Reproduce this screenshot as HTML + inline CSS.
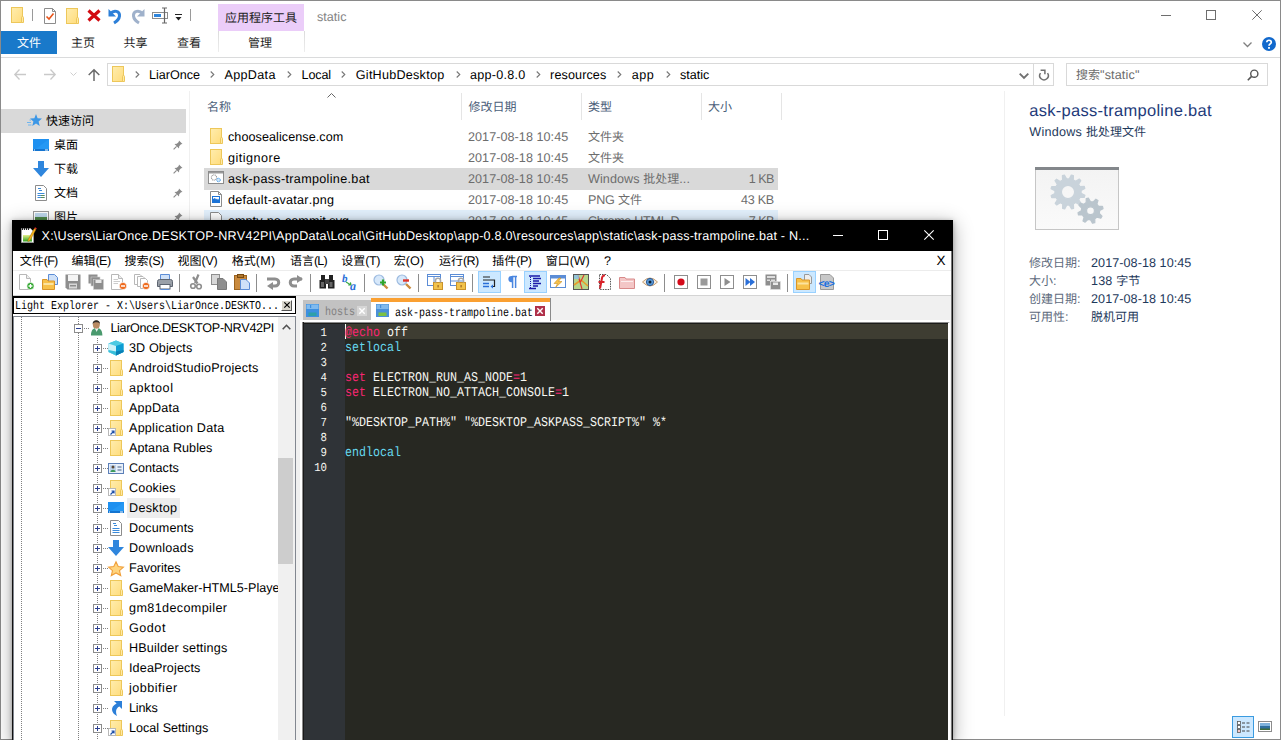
<!DOCTYPE html>
<html><head><meta charset="utf-8"><title>static</title>
<style>
html,body{margin:0;padding:0}html{overflow:hidden;width:1281px;height:740px}
body{width:1281px;height:740px;position:relative;overflow:hidden;background:#fff;font-family:"Liberation Sans",sans-serif;font-size:12.6px;color:#000;line-height:1;text-rendering:geometricPrecision;font-kerning:none}
.a{position:absolute}
.t{position:absolute;white-space:nowrap;line-height:16px;height:16px}
svg{display:block}
.cj{font-family:"Liberation Sans","Noto Sans CJK SC",sans-serif;font-size:12px;letter-spacing:0}
.ic{position:absolute;overflow:visible}
#ex{left:0;top:0;width:1281px;height:740px;box-sizing:border-box;border:1px solid #8a8a8a;background:#fff}
.fd{color:#6d6d6d}
.dv{color:#1E395B}
.dl{color:#5E6B7D}
#np{left:12px;top:220px;width:941px;height:521px;background:#f0f0f0;box-sizing:border-box;border:1px solid #111;box-shadow:0 1px 5px rgba(0,0,0,.3),0 4px 18px 1px rgba(0,0,0,.3)}
.mono{font-family:"Liberation Mono",monospace}
.code{position:absolute;left:345.4px;font-family:"Liberation Mono",monospace;font-size:13.3px;line-height:15px;height:15px;white-space:pre;color:#f8f8f2;transform:scaleX(.8772);transform-origin:0 0}
.ln{position:absolute;left:304px;width:23px;text-align:right;font-family:"Liberation Mono",monospace;font-size:12.2px;line-height:15px;height:15px;color:#f8f8f2;transform:scaleX(.8772);transform-origin:100% 0;margin-top:.7px}
.sim{font-family:"Liberation Mono",monospace;font-size:12px;transform-origin:0 50%;transform:scaleX(.8333)}
</style></head><body>
<svg width="0" height="0" style="position:absolute"><defs>

<linearGradient id="gf" x1="0" y1="0" x2="1" y2="1"><stop offset="0" stop-color="#FFEDAE"/><stop offset="1" stop-color="#FFDC7C"/></linearGradient>
<symbol id="fold" viewBox="0 0 13 16"><rect x="0.5" y="0.5" width="11" height="15" fill="url(#gf)" stroke="#EDC75A"/><path d="M10.5 15.5V10.6Q10.5 9.5 11.5 9.5Q12.5 9.5 12.5 10.6V15.5Z" fill="#FFE9A4" stroke="#EDC75A"/></symbol>
<symbol id="plus" viewBox="0 0 9 9"><rect x="0.5" y="0.5" width="8" height="8" fill="#fff" stroke="#8c8c8c"/><path d="M2 4.5H7M4.5 2V7" stroke="#2b3f8f" stroke-width="1"/></symbol>
<symbol id="minus" viewBox="0 0 9 9"><rect x="0.5" y="0.5" width="8" height="8" fill="#fff" stroke="#8c8c8c"/><path d="M2 4.5H7" stroke="#2b3f8f" stroke-width="1"/></symbol>
<symbol id="pin" viewBox="0 0 10 10"><path d="M6 0.5L9.5 4L8 4.3L6.2 6.2L6 8.5L1.5 4L3.8 3.8L5.7 2Z" fill="#8a8a8a"/><path d="M3.6 6.4L0.6 9.4" stroke="#8a8a8a" stroke-width="1.1"/></symbol>

</defs></svg>
<div id="ex" class="a"></div>
<svg class="ic" style="left:11px;top:7px" width="13" height="16"><use href="#fold"/></svg>
<div class="a" style="left:32px;top:9px;width:1px;height:12px;background:#9a9a9a;"></div>
<svg class="ic" style="left:44px;top:8px" width="12" height="16" viewBox="0 0 12 16"><path d="M0.5 0.5H8.5L11.5 3.5V15.5H0.5Z" fill="#fff" stroke="#8c8c8c"/><path d="M8.5 0.5V3.5H11.5" fill="none" stroke="#8c8c8c"/><path d="M2.5 8.5L5 11L9.5 5.5" fill="none" stroke="#E8541A" stroke-width="1.6"/></svg>
<svg class="ic" style="left:66px;top:8px" width="13" height="16"><use href="#fold"/></svg>
<svg class="ic" style="left:87px;top:9px" width="14" height="13" viewBox="0 0 14 13"><path d="M1.5 1.5L12.5 11.5M12.5 1.5L1.5 11.5" stroke="#D20A11" stroke-width="3.2"/></svg>
<svg class="ic" style="left:108px;top:8px" width="14" height="16" viewBox="0 0 14 16"><path d="M2.5 5.5C6 1.5 12 3 11.5 8C11.2 11 8.5 13.5 6 15" fill="none" stroke="#2C7FD8" stroke-width="3"/><path d="M0.5 1V8.5H8Z" fill="#2C7FD8"/></svg>
<svg class="ic" style="left:131px;top:8px" width="14" height="16" viewBox="0 0 14 16"><path d="M11.5 5.5C8 1.5 2 3 2.5 8C2.8 11 5.5 13.5 8 15" fill="none" stroke="#9FB1CB" stroke-width="3"/><path d="M13.5 1V8.5H6Z" fill="#9FB1CB"/></svg>
<svg class="ic" style="left:152px;top:7px" width="17" height="17" viewBox="0 0 17 17"><rect x="0.5" y="5.5" width="15" height="6" fill="#fff" stroke="#8c8c8c"/><rect x="2" y="7" width="7" height="3" fill="#2F86DD"/><path d="M12.5 1V16M10 1H15M10 16H15" stroke="#666" stroke-width="1.2" fill="none"/></svg>
<svg class="ic" style="left:175px;top:14px" width="7" height="7" viewBox="0 0 7 7"><path d="M0 0.5H7" stroke="#222" stroke-width="1"/><path d="M0.5 3H6.5L3.5 6.5Z" fill="#222"/></svg>
<div class="a" style="left:190px;top:9px;width:1px;height:12px;background:#9a9a9a;"></div>
<div class="a" style="left:218px;top:4px;width:86px;height:27px;background:#EBCDF9;"></div>
<div class="t " style="left:225px;top:9.65px;"><span class="cj" style="color:#222">应用程序工具</span></div>
<div class="t " style="letter-spacing:0.016px;left:317px;top:8.85px;color:#858585">static</div>
<svg class="ic" style="left:1161px;top:15px" width="10" height="1" viewBox="0 0 10 1"><rect width="10" height="1" fill="#6e6e6e"/></svg>
<svg class="ic" style="left:1206px;top:10px" width="10" height="10" viewBox="0 0 10 10"><rect x="0.5" y="0.5" width="9" height="9" fill="none" stroke="#6e6e6e"/></svg>
<svg class="ic" style="left:1252px;top:10px" width="10" height="10" viewBox="0 0 10 10"><path d="M0.3 0.3L9.7 9.7M9.7 0.3L0.3 9.7" stroke="#6e6e6e" stroke-width="1"/></svg>
<div class="a" style="left:1px;top:31px;width:56px;height:23px;background:#1979CA;"></div>
<div class="t " style="left:17px;top:35.45px;"><span class="cj" style="color:#fff">文件</span></div>
<div class="t " style="left:71px;top:35.45px;"><span class="cj" style="color:#1e1e1e">主页</span></div>
<div class="t " style="left:123.5px;top:35.45px;"><span class="cj" style="color:#1e1e1e">共享</span></div>
<div class="t " style="left:177px;top:35.45px;"><span class="cj" style="color:#1e1e1e">查看</span></div>
<div class="a" style="left:218px;top:31px;width:1px;height:21px;background:linear-gradient(#dcdcdc,#ededed);"></div>
<div class="a" style="left:304px;top:31px;width:1px;height:21px;background:linear-gradient(#dcdcdc,#ededed);"></div>
<div class="t " style="left:248px;top:35.45px;"><span class="cj" style="color:#1e1e1e">管理</span></div>
<svg class="ic" style="left:1242.5px;top:41.5px" width="9" height="5" viewBox="0 0 9 5"><path d="M0.5 0.5L4.5 4.5L8.5 0.5" fill="none" stroke="#808080" stroke-width="1.3"/></svg>
<svg class="ic" style="left:1262px;top:37px" width="14" height="14" viewBox="0 0 14 14"><circle cx="7" cy="7" r="7" fill="#1168CC"/><path d="M4.8 5.3C4.8 2.6 9.3 2.6 9.3 5.2C9.3 6.9 7 7 7 8.8" fill="none" stroke="#fff" stroke-width="1.7"/><rect x="6.1" y="10" width="1.8" height="1.8" fill="#fff"/></svg>
<div class="a" style="left:1px;top:57px;width:1279px;height:1px;background:#DADBDC;"></div>
<svg class="ic" style="left:14px;top:69px" width="12" height="11" viewBox="0 0 12 11"><path d="M5.5 0.5L0.8 5.5L5.5 10.5M0.8 5.5H12" fill="none" stroke="#c9c9c9" stroke-width="1.3"/></svg>
<svg class="ic" style="left:44px;top:69px" width="12" height="11" viewBox="0 0 12 11"><path d="M6.5 0.5L11.2 5.5L6.5 10.5M11.2 5.5H0" fill="none" stroke="#c9c9c9" stroke-width="1.3"/></svg>
<svg class="ic" style="left:70px;top:72px" width="7" height="4" viewBox="0 0 7 4"><path d="M0.5 0.5L3.5 3.5L6.5 0.5" fill="none" stroke="#cfcfcf"/></svg>
<svg class="ic" style="left:88px;top:69px" width="12" height="12" viewBox="0 0 12 12"><path d="M0.7 6L6 0.8L11.3 6M6 0.8V12" fill="none" stroke="#6a6a6a" stroke-width="1.5"/></svg>
<div class="a" style="left:107px;top:63px;width:927px;height:23px;background:#fff;box-sizing:border-box;border:1px solid #d9d9d9"></div>
<div class="a" style="left:1033px;top:63px;width:21px;height:23px;background:#fff;box-sizing:border-box;border:1px solid #d9d9d9"></div>
<svg class="ic" style="left:112px;top:66px" width="13" height="16"><use href="#fold"/></svg>
<svg class="ic" style="left:134.5px;top:71px" width="5" height="7" viewBox="0 0 5 7"><path d="M0.7 0.5L3.8 3.5L0.7 6.5" fill="none" stroke="#777" stroke-width="1.1"/></svg>
<div class="t " style="letter-spacing:-0.014px;left:149.0px;top:67.00px;">LiarOnce</div>
<svg class="ic" style="left:210px;top:71px" width="5" height="7" viewBox="0 0 5 7"><path d="M0.7 0.5L3.8 3.5L0.7 6.5" fill="none" stroke="#777" stroke-width="1.1"/></svg>
<div class="t " style="letter-spacing:0.319px;left:224.5px;top:67.00px;">AppData</div>
<svg class="ic" style="left:287px;top:71px" width="5" height="7" viewBox="0 0 5 7"><path d="M0.7 0.5L3.8 3.5L0.7 6.5" fill="none" stroke="#777" stroke-width="1.1"/></svg>
<div class="t " style="letter-spacing:-0.122px;left:301.5px;top:67.00px;">Local</div>
<svg class="ic" style="left:341.3px;top:71px" width="5" height="7" viewBox="0 0 5 7"><path d="M0.7 0.5L3.8 3.5L0.7 6.5" fill="none" stroke="#777" stroke-width="1.1"/></svg>
<div class="t " style="letter-spacing:0.245px;left:355.8px;top:67.00px;">GitHubDesktop</div>
<svg class="ic" style="left:455.5px;top:71px" width="5" height="7" viewBox="0 0 5 7"><path d="M0.7 0.5L3.8 3.5L0.7 6.5" fill="none" stroke="#777" stroke-width="1.1"/></svg>
<div class="t " style="letter-spacing:0.241px;left:470.0px;top:67.00px;">app-0.8.0</div>
<svg class="ic" style="left:535.6px;top:71px" width="5" height="7" viewBox="0 0 5 7"><path d="M0.7 0.5L3.8 3.5L0.7 6.5" fill="none" stroke="#777" stroke-width="1.1"/></svg>
<div class="t " style="letter-spacing:0.11px;left:550.1px;top:67.00px;">resources</div>
<svg class="ic" style="left:617.2px;top:71px" width="5" height="7" viewBox="0 0 5 7"><path d="M0.7 0.5L3.8 3.5L0.7 6.5" fill="none" stroke="#777" stroke-width="1.1"/></svg>
<div class="t " style="letter-spacing:0.559px;left:631.7px;top:67.00px;">app</div>
<svg class="ic" style="left:665.5px;top:71px" width="5" height="7" viewBox="0 0 5 7"><path d="M0.7 0.5L3.8 3.5L0.7 6.5" fill="none" stroke="#777" stroke-width="1.1"/></svg>
<div class="t " style="letter-spacing:-0.017px;left:680.0px;top:67.00px;">static</div>
<svg class="ic" style="left:1019px;top:72.5px" width="10" height="6" viewBox="0 0 10 6"><path d="M0.7 0.7L5 5L9.3 0.7" fill="none" stroke="#707070" stroke-width="1.9"/></svg>
<svg class="ic" style="left:1039px;top:68.5px" width="11" height="12" viewBox="0 0 11 12"><path d="M8.52 4.13A4.3 4.3 0 1 1 1.48 4.13" fill="none" stroke="#707070" stroke-width="1.5"/><path d="M1.6 1.2H5.9V5.2" fill="none" stroke="#707070" stroke-width="1.5"/></svg>
<div class="a" style="left:1066px;top:63px;width:202px;height:23px;background:#fff;box-sizing:border-box;border:1px solid #d9d9d9"></div>
<div class="t " style="letter-spacing:0.145px;left:1076px;top:66.85px;color:#6d6d6d"><span class="cj" style="color:#6d6d6d">搜索</span>"static"</div>
<svg class="ic" style="left:1247px;top:69px" width="12" height="12" viewBox="0 0 12 12"><circle cx="7.3" cy="4.7" r="3.6" fill="none" stroke="#555" stroke-width="1.4"/><path d="M4.6 7.4L0.8 11.2" stroke="#555" stroke-width="1.6"/></svg>
<div class="a" style="left:1px;top:109px;width:185px;height:24px;background:#D9D9D9;"></div>
<div class="a" style="left:189px;top:91px;width:1px;height:130px;background:#f0f0f0;"></div>
<svg class="ic" style="left:27px;top:114px" width="15" height="13" viewBox="0 0 15 13"><path d="M9 0L10.6 4.2L15 4.6L11.6 7.4L12.7 12L9 9.4L5.3 12L6.4 7.4L3 4.6L7.4 4.2Z" fill="#3C97E6"/><path d="M0 8.5H4M1 11H4.5M2.5 6H4" stroke="#6FB5EE" stroke-width="1"/></svg>
<div class="t " style="left:46px;top:113.15px;"><span class="cj" style="color:#000">快速访问</span></div>
<svg class="ic" style="left:33px;top:139px" width="16" height="12" viewBox="0 0 16 12"><rect width="16" height="12" fill="#1E90F0"/><path d="M0 12L16 0V12Z" fill="#2CA0F8" opacity=".5"/><rect x="0" y="10" width="16" height="2" fill="#1474D0"/><rect x="1" y="10.5" width="1" height="1" fill="#fff"/><rect x="12" y="10.5" width="3" height="1" fill="#fff"/></svg>
<div class="t " style="left:54px;top:136.65px;"><span class="cj" style="color:#000">桌面</span></div>
<svg class="ic" style="left:33px;top:161px" width="16" height="16" viewBox="0 0 16 16"><path d="M5 0H11V7H16L8 16L0 7H5Z" fill="#2F86DD"/></svg>
<div class="t " style="left:54px;top:160.65px;"><span class="cj" style="color:#000">下载</span></div>
<svg class="ic" style="left:35px;top:185px" width="12" height="16" viewBox="0 0 12 16"><path d="M0.5 0.5H8.5L11.5 3.5V15.5H0.5Z" fill="#fff" stroke="#8c8c8c"/><path d="M3 3.5H6M4 5.5H7M2.5 8.5H9.5M2.5 10.5H9.5M2.5 12.5H9.5" stroke="#3B8BDA" stroke-width="1"/><path d="M6 10.5H9.5M6 12.5H9.5" stroke="#5a8a5a"/></svg>
<div class="t " style="left:54px;top:184.75px;"><span class="cj" style="color:#000">文档</span></div>
<svg class="ic" style="left:33px;top:211px" width="16" height="12" viewBox="0 0 16 12"><rect x="0.5" y="0.5" width="15" height="11" fill="#fff" stroke="#9a9a9a"/><rect x="2" y="2" width="12" height="4" fill="#BFD9EE"/><rect x="2" y="6" width="12" height="4" fill="#4F8A4A"/></svg>
<div class="t " style="left:54px;top:208.75px;"><span class="cj" style="color:#000">图片</span></div>
<svg class="ic" style="left:173px;top:140px" width="10" height="10"><use href="#pin"/></svg>
<svg class="ic" style="left:173px;top:164px" width="10" height="10"><use href="#pin"/></svg>
<svg class="ic" style="left:173px;top:188px" width="10" height="10"><use href="#pin"/></svg>
<svg class="ic" style="left:173px;top:212px" width="10" height="10"><use href="#pin"/></svg>
<svg class="ic" style="left:327px;top:93px" width="9" height="5" viewBox="0 0 9 5"><path d="M0.5 4.5L4.5 0.5L8.5 4.5" fill="none" stroke="#666"/></svg>
<div class="t " style="left:207px;top:98.55px;"><span class="cj" style="color:#4C607A">名称</span></div>
<div class="t " style="left:468.5px;top:98.55px;"><span class="cj" style="color:#4C607A">修改日期</span></div>
<div class="t " style="left:588px;top:98.55px;"><span class="cj" style="color:#4C607A">类型</span></div>
<div class="t " style="left:708px;top:98.55px;"><span class="cj" style="color:#4C607A">大小</span></div>
<div class="a" style="left:461px;top:93px;width:1px;height:27px;background:#E5E5E5;"></div>
<div class="a" style="left:581px;top:93px;width:1px;height:27px;background:#E5E5E5;"></div>
<div class="a" style="left:701px;top:93px;width:1px;height:27px;background:#E5E5E5;"></div>
<div class="a" style="left:781px;top:93px;width:1px;height:27px;background:#E5E5E5;"></div>
<div class="a" style="left:204px;top:168px;width:574px;height:21.5px;background:#D9D9D9;"></div>
<div class="a" style="left:204px;top:210px;width:574px;height:21px;background:#E5F3FF;"></div>
<svg class="ic" style="left:210px;top:128px" width="13" height="16"><use href="#fold"/></svg>
<svg class="ic" style="left:210px;top:149px" width="13" height="16"><use href="#fold"/></svg>
<svg class="ic" style="left:208px;top:171px" width="16" height="13" viewBox="0 0 16 13"><rect x="0.5" y="0.5" width="15" height="12" fill="#fff" stroke="#8c8c8c"/><rect x="1" y="1" width="14" height="1.5" fill="#9a9a9a"/><circle cx="6" cy="6.5" r="2.6" fill="none" stroke="#9a9a9a" stroke-width="1.2" stroke-dasharray="1 0.6"/><circle cx="10.5" cy="9" r="1.8" fill="#cfe6fa" stroke="#3C97E6" stroke-width="1" stroke-dasharray="1 0.5"/></svg>
<svg class="ic" style="left:210px;top:191px" width="12" height="16" viewBox="0 0 12 16"><path d="M0.5 0.5H8.5L11.5 3.5V15.5H0.5Z" fill="#fff" stroke="#8c8c8c"/><path d="M8.5 0.5V3.5H11.5" fill="none" stroke="#8c8c8c"/><rect x="2" y="5" width="8" height="7" fill="#1C73D6"/><path d="M3 6H9V7.5L8 9L7 7.5L6 8.5L5 7L3 8Z" fill="#fff"/></svg>
<svg class="ic" style="left:210px;top:212px" width="12" height="16" viewBox="0 0 12 16"><path d="M0.5 0.5H8.5L11.5 3.5V15.5H0.5Z" fill="#fff" stroke="#8c8c8c"/></svg>
<div class="t " style="letter-spacing:0.066px;left:228px;top:129.00px;">choosealicense.com</div>
<div class="t " style="letter-spacing:0.487px;left:228px;top:150.00px;">gitignore</div>
<div class="t " style="letter-spacing:0.322px;left:228px;top:171.00px;">ask-pass-trampoline.bat</div>
<div class="t " style="letter-spacing:0.265px;left:228px;top:192.00px;">default-avatar.png</div>
<div class="t " style="letter-spacing:0.033px;left:228px;top:213.00px;">empty-no-commit.svg</div>
<div class="t fd" style="letter-spacing:0.053px;left:468px;top:129.00px;">2017-08-18 10:45</div>
<div class="t fd" style="letter-spacing:0.053px;left:468px;top:150.00px;">2017-08-18 10:45</div>
<div class="t fd" style="letter-spacing:0.053px;left:468px;top:171.00px;">2017-08-18 10:45</div>
<div class="t fd" style="letter-spacing:0.053px;left:468px;top:192.00px;">2017-08-18 10:45</div>
<div class="t fd" style="letter-spacing:0.053px;left:468px;top:213.00px;">2017-08-18 10:45</div>
<div class="t fd" style="left:588px;top:129.00px;"><span class="cj" style="color:#6d6d6d">文件夹</span></div>
<div class="t fd" style="left:588px;top:150.00px;"><span class="cj" style="color:#6d6d6d">文件夹</span></div>
<div class="t fd" style="letter-spacing:0.082px;left:588px;top:171.00px;">Windows <span class="cj" style="color:#6d6d6d">批处理</span>...</div>
<div class="t fd" style="letter-spacing:-0.199px;left:588px;top:192.00px;">PNG <span class="cj" style="color:#6d6d6d">文件</span></div>
<div class="t fd" style="letter-spacing:-0.292px;left:588px;top:213.00px;">Chrome HTML D...</div>
<div class="t fd" style="left:674px;width:100px;top:171.00px"><span class="a" style="letter-spacing:-0.502px;right:0">1 KB</span></div>
<div class="t fd" style="left:674px;width:100px;top:192.00px"><span class="a" style="letter-spacing:-0.263px;right:0">43 KB</span></div>
<div class="t fd" style="left:674px;width:100px;top:213.00px"><span class="a" style="letter-spacing:-0.502px;right:0">7 KB</span></div>
<div class="a" style="left:1004px;top:91px;width:1px;height:625px;background:#f0f0f0;"></div>
<div class="t" style="letter-spacing:0.283px;left:1029.3px;top:100.4px;font-size:16.5px;line-height:22px;height:22px;color:#1E3A7A">ask-pass-trampoline.bat</div>
<div class="t dv" style="letter-spacing:0.25px;left:1029.3px;top:124.35px;">Windows <span class="cj" style="color:#1E395B">批处理文件</span></div>
<div class="a" style="left:1035px;top:167px;width:84px;height:63px;background:linear-gradient(#F3F3F3,#FAFAFA);box-sizing:border-box;border:1px solid #c6c6c6"></div>
<div class="a" style="left:1035px;top:167px;width:84px;height:3px;background:#83878B;"></div>
<svg class="ic" style="left:1035px;top:167px" width="84" height="63" viewBox="0 0 84 63"><path d="M46.1 26.3 L49.9 28.3 L49.3 30.4 L45.1 30.3 L43.7 32.7 L46.0 36.3 L44.4 37.8 L40.8 35.6 L38.4 37.0 L38.6 41.3 L36.5 41.8 L34.4 38.1 L31.7 38.1 L29.7 41.9 L27.6 41.3 L27.7 37.1 L25.3 35.7 L21.7 38.0 L20.2 36.4 L22.4 32.8 L21.0 30.4 L16.7 30.6 L16.2 28.5 L19.9 26.4 L19.9 23.7 L16.1 21.7 L16.7 19.6 L20.9 19.7 L22.3 17.3 L20.0 13.7 L21.6 12.2 L25.2 14.4 L27.6 13.0 L27.4 8.7 L29.5 8.2 L31.6 11.9 L34.3 11.9 L36.3 8.1 L38.4 8.7 L38.3 12.9 L40.7 14.3 L44.3 12.0 L45.8 13.6 L43.6 17.2 L45.0 19.6 L49.3 19.4 L49.8 21.5 L46.1 23.6Z M26.4 25.0 a6.6 6.6 0 1 0 13.2 0 a6.6 6.6 0 1 0 -13.2 0Z" fill="#C9D3DB" fill-rule="evenodd" stroke="#C9D3DB" stroke-width="1.2" stroke-linejoin="round"/><path d="M64.3 46.4 L67.0 49.1 L65.8 51.2 L62.1 50.1 L59.8 51.8 L59.8 55.7 L57.5 56.2 L55.6 52.9 L52.8 52.5 L50.1 55.2 L48.0 54.0 L49.1 50.3 L47.4 48.0 L43.5 48.0 L43.0 45.7 L46.3 43.8 L46.7 41.0 L44.0 38.3 L45.2 36.2 L48.9 37.3 L51.2 35.6 L51.2 31.7 L53.5 31.2 L55.4 34.5 L58.2 34.9 L60.9 32.2 L63.0 33.4 L61.9 37.1 L63.6 39.4 L67.5 39.4 L68.0 41.7 L64.7 43.6Z M51.6 43.7 a3.9 3.9 0 1 0 7.8 0 a3.9 3.9 0 1 0 -7.8 0Z" fill="#BAC5CD" fill-rule="evenodd" stroke="#BAC5CD" stroke-width="1.2" stroke-linejoin="round"/></svg>
<div class="t dl" style="left:1029px;top:254.75px;"><span class="cj" style="color:#5E6B7D">修改日期</span>:</div>
<div class="t dl" style="left:1029px;top:272.75px;"><span class="cj" style="color:#5E6B7D">大小</span>:</div>
<div class="t dl" style="left:1029px;top:290.75px;"><span class="cj" style="color:#5E6B7D">创建日期</span>:</div>
<div class="t dl" style="left:1029px;top:308.75px;"><span class="cj" style="color:#5E6B7D">可用性</span>:</div>
<div class="t dv" style="letter-spacing:0.06px;left:1091px;top:254.75px;">2017-08-18 10:45</div>
<div class="t dv" style="letter-spacing:0.17px;left:1091px;top:272.75px;">138 <span class="cj" style="color:#1E395B">字节</span></div>
<div class="t dv" style="letter-spacing:0.06px;left:1091px;top:290.75px;">2017-08-18 10:45</div>
<div class="t dv" style="left:1091px;top:308.75px;"><span class="cj" style="color:#1E395B">脱机可用</span></div>
<div class="a" style="left:1232px;top:716px;width:22px;height:22px;background:#CCE8FF;box-sizing:border-box;border:1px solid #3A9BE0"></div>
<svg class="ic" style="left:1237px;top:721px" width="13" height="12" viewBox="0 0 13 12"><g fill="#fff" stroke="#555" stroke-width=".8"><rect x="0.5" y="0.5" width="3" height="3"/><rect x="0.5" y="4.5" width="3" height="3"/><rect x="0.5" y="8.5" width="3" height="3"/></g><path d="M5 2H8M9.5 2H12.5M5 6H8M9.5 6H12.5M5 10H8M9.5 10H12.5" stroke="#444" stroke-width="1"/><rect x="1.5" y="9.5" width="1" height="1" fill="#d22"/></svg>
<svg class="ic" style="left:1258px;top:721px" width="14" height="11" viewBox="0 0 14 11"><rect x="0.5" y="0.5" width="13" height="10" fill="#fff" stroke="#8c8c8c"/><rect x="2" y="2" width="10" height="4" fill="#7FB2DC"/><rect x="2" y="5" width="10" height="4" fill="#2E6E9E"/><rect x="2" y="7.5" width="10" height="1.5" fill="#3d6b3a"/></svg>
<div id="np" class="a"></div>
<div class="a" style="left:12px;top:220px;width:941px;height:31px;background:#000"></div>
<div class="a" style="left:13px;top:251px;width:939px;height:19px;background:#fff"></div>
<div class="a" style="left:13px;top:270px;width:939px;height:1px;background:#ececec"></div>
<div class="a" style="left:13px;top:271px;width:939px;height:24px;background:#fff"></div>
<div class="a" style="left:13px;top:295px;width:939px;height:1px;background:#d4d4d4"></div>
<svg class="ic" style="left:21px;top:227px" width="16" height="16" viewBox="0 0 16 16"><defs><linearGradient id="ng" x1="0" y1="0" x2="0" y2="1"><stop offset="0" stop-color="#E6F08A"/><stop offset="1" stop-color="#2FA020"/></linearGradient></defs><path d="M0.5 1.5H9.5L12.5 4.5V15.5H0.5Z" fill="#fff" stroke="#9a9a9a"/><path d="M1.5 1V3M3.5 1V3M5.5 1V3M7.5 1V3" stroke="#222" stroke-width="1.1"/><rect x="2" y="8" width="9" height="6.5" fill="url(#ng)"/><path d="M7.2 12.6L13.2 1.6L15 2.6L9 13.6L6.8 14.6Z" fill="#F5B21A" stroke="#8a5a00" stroke-width=".4"/><path d="M13.2 1.6L14 0.2L15.8 1.2L15 2.6Z" fill="#D8302A"/></svg>
<div class="t" style="letter-spacing:0.229px;left:41.5px;top:227.65px;color:#fff">X:\Users\LiarOnce.DESKTOP-NRV42PI\AppData\Local\GitHubDesktop\app-0.8.0\resources\app\static\ask-pass-trampoline.bat - N...</div>
<svg class="ic" style="left:833px;top:235px" width="10" height="1"><rect width="10" height="1" fill="#fff"/></svg>
<svg class="ic" style="left:878px;top:230px" width="10" height="10" viewBox="0 0 10 10"><rect x="0.5" y="0.5" width="9" height="9" fill="none" stroke="#fff"/></svg>
<svg class="ic" style="left:924px;top:230px" width="10" height="10" viewBox="0 0 10 10"><path d="M0.3 0.3L9.7 9.7M9.7 0.3L0.3 9.7" stroke="#fff" stroke-width="1.1"/></svg>
<div class="t mn" style="letter-spacing:-0.763px;left:19.7px;top:253.15px"><span class="cj" style="color:#000">文件</span>(F)</div>
<div class="t mn" style="letter-spacing:-0.599px;left:71.5px;top:253.15px"><span class="cj" style="color:#000">编辑</span>(E)</div>
<div class="t mn" style="letter-spacing:-0.534px;left:124.5px;top:253.15px"><span class="cj" style="color:#000">搜索</span>(S)</div>
<div class="t mn" style="letter-spacing:-0.266px;left:177.5px;top:253.15px"><span class="cj" style="color:#000">视图</span>(V)</div>
<div class="t mn" style="letter-spacing:0.273px;left:231.7px;top:253.15px"><span class="cj" style="color:#000">格式</span>(M)</div>
<div class="t mn" style="letter-spacing:-0.899px;left:290px;top:253.15px"><span class="cj" style="color:#000">语言</span>(L)</div>
<div class="t mn" style="letter-spacing:-0.429px;left:341.3px;top:253.15px"><span class="cj" style="color:#000">设置</span>(T)</div>
<div class="t mn" style="letter-spacing:0.034px;left:393.7px;top:253.15px"><span class="cj" style="color:#000">宏</span>(O)</div>
<div class="t mn" style="letter-spacing:-0.699px;left:439px;top:253.15px"><span class="cj" style="color:#000">运行</span>(R)</div>
<div class="t mn" style="letter-spacing:-0.534px;left:492.3px;top:253.15px"><span class="cj" style="color:#000">插件</span>(P)</div>
<div class="t mn" style="letter-spacing:-0.158px;left:545.7px;top:253.15px"><span class="cj" style="color:#000">窗口</span>(W)</div>
<div class="t mn" style="left:604px;top:253.15px">?</div>
<div class="t" style="left:936.5px;top:252.90px;font-size:13.5px">X</div>
<svg class="ic" style="left:19px;top:274px" width="16" height="16" viewBox="0 0 16 16"><path d="M0.5 0.5H7.5L11.5 4.5V15.5H0.5Z" fill="#fff" stroke="#b8b8b8"/><path d="M7.5 0.5V4.5H11.5" fill="#eee" stroke="#b8b8b8"/><circle cx="11.5" cy="12" r="3.6" fill="#2EA52C" stroke="#fff" stroke-width=".6"/><path d="M9.5 12H13.5M11.5 10V14" stroke="#fff" stroke-width="1.3"/></svg>
<svg class="ic" style="left:42px;top:274px" width="16" height="16" viewBox="0 0 16 16"><path d="M6.5 0.5H12.5L15.5 3.5V10.5H6.5Z" fill="#CFE1F8" stroke="#5C8DD6"/><path d="M0.5 5.5H5L6 7H12.5V15.5H0.5Z" fill="#F7C14A" stroke="#D9952A"/><rect x="1.5" y="9" width="10" height="2" fill="#FCE3A0"/></svg>
<svg class="ic" style="left:65px;top:274px" width="16" height="16" viewBox="0 0 16 16"><path d="M0.5 0.5H15.5V15.5H2.5L0.5 13.5Z" fill="#8e8e8e"/><rect x="3" y="1" width="10" height="6" fill="#f4f4f4"/><rect x="4" y="9.5" width="8" height="5" fill="#d8d8d8"/><rect x="5" y="11" width="6" height="1.5" fill="#8e8e8e"/></svg>
<svg class="ic" style="left:88px;top:274px" width="16" height="16" viewBox="0 0 16 16"><rect x="0.5" y="0.5" width="9" height="9" fill="#8e8e8e"/><rect x="3" y="3" width="9" height="9" fill="#8e8e8e" stroke="#cfcfcf" stroke-width=".6"/><rect x="5.5" y="5.5" width="10" height="10" fill="#8e8e8e" stroke="#cfcfcf" stroke-width=".6"/><rect x="7.5" y="6" width="6" height="3" fill="#e8e8e8"/></svg>
<svg class="ic" style="left:111px;top:274px" width="16" height="16" viewBox="0 0 16 16"><path d="M0.5 0.5H7.5L11.5 4.5V15.5H0.5Z" fill="#fff" stroke="#b8b8b8"/><path d="M7.5 0.5V4.5H11.5" fill="#eee" stroke="#b8b8b8"/><path d="M2.5 5.5H7M2.5 7.5H9M2.5 9.5H7" stroke="#ccc"/><circle cx="12" cy="12" r="3.6" fill="#EE6A1C" stroke="#fff" stroke-width=".6"/><path d="M10 12H14" stroke="#fff" stroke-width="1.5"/></svg>
<svg class="ic" style="left:134px;top:274px" width="16" height="16" viewBox="0 0 16 16"><path d="M0.5 0.5H6L8.5 3V10.5H0.5Z" fill="#fff" stroke="#b8b8b8"/><path d="M3.5 2.5H9L11.5 5V12.5H3.5Z" fill="#fff" stroke="#b8b8b8"/><path d="M6.5 4.5H11.5L13.5 6.5V14.5H6.5Z" fill="#fff" stroke="#b8b8b8"/><circle cx="12" cy="12" r="3.6" fill="#EE6A1C" stroke="#fff" stroke-width=".6"/><path d="M10 12H14" stroke="#fff" stroke-width="1.5"/></svg>
<svg class="ic" style="left:157px;top:274px" width="16" height="16" viewBox="0 0 16 16"><path d="M3.5 0.5H12.5V7H3.5Z" fill="#CFE1F8" stroke="#5C8DD6"/><path d="M0.5 7.5Q0.5 5.5 2.5 5.5H13.5Q15.5 5.5 15.5 7.5V12.5H0.5Z" fill="#9aa0a8" stroke="#5d6470"/><rect x="3" y="10.5" width="10" height="4.5" fill="#fff" stroke="#5d6470"/><path d="M3.5 15.5H12.5" stroke="#5C8DD6"/></svg>
<div class="a" style="left:179px;top:274px;width:1px;height:18px;background:#8d8d8d"></div>
<svg class="ic" style="left:188px;top:274px" width="16" height="16" viewBox="0 0 16 16"><path d="M10.5 0.5L7 9M5 3L9.5 9.5" stroke="#8e8e8e" stroke-width="2.2" fill="none"/><circle cx="5" cy="12" r="2.3" fill="none" stroke="#8e8e8e" stroke-width="1.6"/><circle cx="11" cy="12.5" r="2.3" fill="none" stroke="#8e8e8e" stroke-width="1.6"/></svg>
<svg class="ic" style="left:211px;top:274px" width="16" height="16" viewBox="0 0 16 16"><rect x="0.5" y="0.5" width="8" height="10" fill="#d8d8d8" stroke="#8e8e8e"/><path d="M6.5 4.5H12L15.5 8V15.5H6.5Z" fill="#8e8e8e" stroke="#7a7a7a"/></svg>
<svg class="ic" style="left:234px;top:274px" width="16" height="16" viewBox="0 0 16 16"><rect x="0.5" y="1.5" width="12" height="14" fill="#C98A3E" stroke="#9C6420"/><rect x="3.5" y="0.5" width="6" height="3" fill="#b07830" stroke="#7a4a10"/><path d="M6.5 5.5H12L15.5 9V15.5H6.5Z" fill="#CFE1F8" stroke="#5C8DD6"/></svg>
<div class="a" style="left:256px;top:274px;width:1px;height:18px;background:#8d8d8d"></div>
<svg class="ic" style="left:265px;top:274px" width="16" height="16" viewBox="0 0 16 16"><path d="M2 5H10C15 5 15 12 10 12H7" fill="none" stroke="#8e8e8e" stroke-width="3"/><path d="M8 8L2 12L8 16Z" fill="#8e8e8e"/></svg>
<svg class="ic" style="left:288px;top:274px" width="16" height="16" viewBox="0 0 16 16"><path d="M14 5H6C1 5 1 12 6 12H9" fill="none" stroke="#8e8e8e" stroke-width="3"/><path d="M9 1L15 5L9 9Z" fill="#8e8e8e"/></svg>
<div class="a" style="left:310px;top:274px;width:1px;height:18px;background:#8d8d8d"></div>
<svg class="ic" style="left:319px;top:274px" width="16" height="16" viewBox="0 0 16 16"><rect x="2" y="1" width="4" height="5" fill="#222"/><rect x="10" y="1" width="4" height="5" fill="#222"/><path d="M0.5 6H7V14.5H0.5ZM9 6H15.5V14.5H9Z" fill="#222"/><rect x="6" y="5" width="4" height="5" fill="#444"/><rect x="2" y="8" width="3" height="5" fill="#666"/><rect x="10.5" y="8" width="3" height="5" fill="#666"/></svg>
<svg class="ic" style="left:342px;top:274px" width="16" height="16" viewBox="0 0 16 16"><text x="0" y="8" font-family="Liberation Serif" font-style="italic" font-weight="bold" font-size="11" fill="#2A6FD8">b</text><text x="8" y="15.5" font-family="Liberation Serif" font-style="italic" font-weight="bold" font-size="12" fill="#2A6FD8">a</text><path d="M4 8L9 11M9 11L6.2 11M9 11L8.4 8.4" stroke="#39A845" stroke-width="1.2" fill="none"/></svg>
<div class="a" style="left:364px;top:274px;width:1px;height:18px;background:#8d8d8d"></div>
<svg class="ic" style="left:373px;top:274px" width="16" height="16" viewBox="0 0 16 16"><circle cx="6" cy="6" r="5" fill="#D7E8FA" stroke="#9DBBE0" stroke-width="1.2"/><path d="M10 10L14.5 14.5" stroke="#C98A3E" stroke-width="2.4"/><path d="M7 8.5H13M10 5.5V11.5" stroke="#2EA52C" stroke-width="2.2"/></svg>
<svg class="ic" style="left:396px;top:274px" width="16" height="16" viewBox="0 0 16 16"><circle cx="6" cy="6" r="5" fill="#D7E8FA" stroke="#9DBBE0" stroke-width="1.2"/><path d="M10 10L14.5 14.5" stroke="#C98A3E" stroke-width="2.4"/><path d="M7 6.5H13" stroke="#E0332B" stroke-width="2.4"/></svg>
<div class="a" style="left:418px;top:274px;width:1px;height:18px;background:#8d8d8d"></div>
<svg class="ic" style="left:427px;top:274px" width="16" height="16" viewBox="0 0 16 16"><rect x="0.5" y="0.5" width="13" height="11" fill="#fff" stroke="#5C8DD6"/><path d="M0.5 2.5H13.5M7 2.5V11.5" stroke="#5C8DD6"/><rect x="6.5" y="8.5" width="9" height="7" fill="#F2C24A" stroke="#C9922A"/><path d="M8.5 8.5V6.5C8.5 3.5 13.5 3.5 13.5 6.5V8.5" fill="none" stroke="#a8a8a8" stroke-width="1.6"/><rect x="10.5" y="11" width="1.2" height="2.4" fill="#9C6420"/></svg>
<svg class="ic" style="left:450px;top:274px" width="16" height="16" viewBox="0 0 16 16"><rect x="0.5" y="0.5" width="13" height="11" fill="#fff" stroke="#5C8DD6"/><path d="M0.5 2.5H13.5M0.5 7H13.5" stroke="#5C8DD6"/><rect x="6.5" y="8.5" width="9" height="7" fill="#F2C24A" stroke="#C9922A"/><path d="M8.5 8.5V6.5C8.5 3.5 13.5 3.5 13.5 6.5V8.5" fill="none" stroke="#a8a8a8" stroke-width="1.6"/><rect x="10.5" y="11" width="1.2" height="2.4" fill="#9C6420"/></svg>
<div class="a" style="left:472px;top:274px;width:1px;height:18px;background:#8d8d8d"></div>
<div class="a" style="left:478px;top:271px;width:23px;height:22px;box-sizing:border-box;border:1px solid #99D1FF;background:#CCE8FF"></div>
<svg class="ic" style="left:481px;top:274px" width="16" height="16" viewBox="0 0 16 16"><path d="M2 3H9M2 6H13.5V12.5H11" stroke="#222" stroke-width="1.2" fill="none"/><path d="M2 9.5H8M2 12.5H8" stroke="#2A6FD8" stroke-width="1.6"/><path d="M12 10.5L9.5 12.5L12 14.5Z" fill="#2A6FD8"/></svg>
<svg class="ic" style="left:504px;top:274px" width="16" height="16" viewBox="0 0 16 16"><path d="M8.6 2.6V14M11.6 2.6V14M13 2.6H8" fill="none" stroke="#4A86E0" stroke-width="1.5"/><path d="M8.6 2H7.4A3.1 3.1 0 0 0 7.4 8.2H8.6Z" fill="#4A86E0"/></svg>
<div class="a" style="left:524px;top:271px;width:23px;height:22px;box-sizing:border-box;border:1px solid #99D1FF;background:#CCE8FF"></div>
<svg class="ic" style="left:527px;top:274px" width="16" height="16" viewBox="0 0 16 16"><path d="M2 2H13M6 4.5H14M6 7H12M6 9.5H14M6 12H11M2 14.5H9" stroke="#1a1aa8" stroke-width="1.3"/><path d="M3.5 3V14" stroke="#1a1aa8" stroke-width="1" stroke-dasharray="1 1"/></svg>
<svg class="ic" style="left:550px;top:274px" width="16" height="16" viewBox="0 0 16 16"><rect x="0.5" y="1.5" width="15" height="12" fill="#fff" stroke="#5C8DD6"/><rect x="1" y="2" width="14" height="2.5" fill="#5C8DD6"/><path d="M9 4L4 9.5H7.5L5.5 13.5L12 7.5H8.5L11 4Z" fill="#F7C14A" stroke="#C9922A" stroke-width=".6"/></svg>
<svg class="ic" style="left:573px;top:274px" width="16" height="16" viewBox="0 0 16 16"><rect x="0.5" y="0.5" width="15" height="15" fill="#B7D68A" stroke="#555"/><path d="M1 11L8 6L15 12" stroke="#E89B2A" stroke-width="1.6" fill="none"/><path d="M5 1L9 15M11 1L7 9" stroke="#E0332B" stroke-width="1.1"/><rect x="1" y="1" width="5" height="4" fill="#8CC0E8" opacity=".8"/></svg>
<svg class="ic" style="left:596px;top:274px" width="16" height="16" viewBox="0 0 16 16"><path d="M3.5 0.5H10.5L14.5 4.5V15.5H3.5Z" fill="#fff" stroke="#555" stroke-dasharray="1.5 1"/><path d="M9 1.5C6.5 1 6 3 5.5 7L4 14.5M2.5 8H8.5" stroke="#D8222A" stroke-width="2" fill="none"/></svg>
<svg class="ic" style="left:619px;top:274px" width="16" height="16" viewBox="0 0 16 16"><path d="M0.5 3.5H6L7 5H15.5V14.5H0.5Z" fill="#F3C6C6" stroke="#D88A8A"/><rect x="2" y="7" width="12" height="1" fill="#fff" opacity=".7"/></svg>
<svg class="ic" style="left:642px;top:274px" width="16" height="16" viewBox="0 0 16 16"><path d="M0.5 8Q8 0 15.5 8Q8 16 0.5 8Z" fill="#F5EBDD" stroke="#C9A070"/><circle cx="8" cy="8" r="3.6" fill="#5B9BD8" stroke="#2A5A98"/><circle cx="8" cy="8" r="1.5" fill="#123"/></svg>
<div class="a" style="left:664px;top:274px;width:1px;height:18px;background:#8d8d8d"></div>
<svg class="ic" style="left:673px;top:274px" width="16" height="16" viewBox="0 0 16 16"><rect x="1.5" y="1.5" width="13" height="13" fill="#fff" stroke="#8e8e8e"/><circle cx="8" cy="8" r="3.6" fill="#D40A1A"/></svg>
<svg class="ic" style="left:696px;top:274px" width="16" height="16" viewBox="0 0 16 16"><rect x="1.5" y="1.5" width="13" height="13" fill="#fff" stroke="#8e8e8e"/><rect x="4.5" y="4.5" width="7" height="7" fill="#9a9a9a"/></svg>
<svg class="ic" style="left:719px;top:274px" width="16" height="16" viewBox="0 0 16 16"><rect x="1.5" y="1.5" width="13" height="13" fill="#fff" stroke="#8e8e8e"/><path d="M5.5 4L11.5 8L5.5 12Z" fill="#8e8e8e"/></svg>
<svg class="ic" style="left:742px;top:274px" width="16" height="16" viewBox="0 0 16 16"><rect x="1.5" y="1.5" width="13" height="13" fill="#fff" stroke="#8e8e8e"/><path d="M3.5 4L8.5 8L3.5 12ZM8 4L13 8L8 12Z" fill="#2A6FD8"/></svg>
<svg class="ic" style="left:765px;top:274px" width="16" height="16" viewBox="0 0 16 16"><rect x="0.5" y="0.5" width="11" height="11" fill="#8e8e8e"/><rect x="2" y="2" width="8" height="2" fill="#ddd"/><rect x="2" y="5.5" width="3" height="1.5" fill="#ddd"/><rect x="6" y="5.5" width="4" height="1.5" fill="#ddd"/><rect x="5.5" y="7.5" width="10" height="8" fill="#8e8e8e" stroke="#e0e0e0" stroke-width=".7"/><rect x="8" y="8.5" width="5" height="2.5" fill="#e8e8e8"/></svg>
<div class="a" style="left:787px;top:274px;width:1px;height:18px;background:#8d8d8d"></div>
<div class="a" style="left:793px;top:271px;width:23px;height:22px;box-sizing:border-box;border:1px solid #99D1FF;background:#CCE8FF"></div>
<svg class="ic" style="left:796px;top:274px" width="16" height="16" viewBox="0 0 16 16"><path d="M8.5 0.5H13L15.5 3V9.5H8.5Z" fill="#eee" stroke="#999"/><path d="M0.5 4.5H5L6 6H13.5V15.5H0.5Z" fill="#F7C14A" stroke="#D9952A"/><rect x="1.5" y="8.5" width="11" height="2" fill="#FCE3A0"/></svg>
<svg class="ic" style="left:819px;top:274px" width="16" height="16" viewBox="0 0 16 16"><path d="M1.5 0.5H11L14.5 4V15.5H1.5Z" fill="#c8c8c8" stroke="#999"/><text x="-0.5" y="13" font-family="Liberation Sans" font-weight="bold" font-size="10.5" fill="#1B6FE0" letter-spacing="-0.9">&lt;e&gt;</text></svg>
<div class="a" style="left:13px;top:296px;width:283px;height:18px;box-sizing:border-box;border:1px solid #000;border-top-width:2px;background:#fff"></div>
<div class="t sim" style="left:15px;top:297.7px;color:#000">Light Explorer - X:\Users\LiarOnce.DESKTO...</div>
<div class="a" style="left:281px;top:299.5px;width:11px;height:11px;box-sizing:border-box;background:#d8d5cc;border:1px solid;border-color:#fff #555 #555 #fff"></div>
<svg class="ic" style="left:283.5px;top:302px" width="6" height="6" viewBox="0 0 6 6"><path d="M0.3 0.3L5.7 5.7M5.7 0.3L0.3 5.7" stroke="#000" stroke-width="1.2"/></svg>
<div class="a" style="left:13px;top:314px;width:283px;height:2px;background:#fff"></div>
<div class="a" style="left:13px;top:316px;width:283px;height:425px;box-sizing:border-box;border:1px solid #828790;background:#fff"></div>
<div class="a" style="left:21px;top:317px;width:1px;height:424px;background:repeating-linear-gradient(#808080 0 1px,transparent 1px 2px)"></div>
<div class="a" style="left:59px;top:317px;width:1px;height:424px;background:repeating-linear-gradient(#808080 0 1px,transparent 1px 2px)"></div>
<div class="a" style="left:78px;top:317px;width:1px;height:424px;background:repeating-linear-gradient(#808080 0 1px,transparent 1px 2px)"></div>
<div class="a" style="left:97px;top:338px;width:1px;height:402px;background:repeating-linear-gradient(#808080 0 1px,transparent 1px 2px)"></div>
<svg class="ic" style="left:74px;top:324px" width="9" height="9"><use href="#minus"/></svg>
<div class="a" style="left:84px;top:328px;width:6px;height:1px;background:repeating-linear-gradient(90deg,#808080 0 1px,transparent 1px 2px)"></div>
<svg class="ic" style="left:91px;top:320px" width="12" height="16" viewBox="0 0 12 16"><ellipse cx="5.3" cy="4.6" rx="3.5" ry="4.2" fill="#B98A62"/><path d="M1.6 4.2C1.2 -1 9.4 -1.2 9 4.4C8.6 2.6 7.4 2 5.4 2.2C3.4 2.2 2.2 2.8 1.6 4.2Z" fill="#2e2b28"/><path d="M0 15.6C0 11 1.6 8.6 4 8.2L5.6 11L7.4 8.2C10 8.8 11.4 11 11.4 15.6Z" fill="#4A9A6E"/><path d="M4 8.2L5.6 12L7.4 8.2L5.7 9.4Z" fill="#E8F0F0"/></svg>
<div class="t" style="letter-spacing:-0.329px;left:110.4px;top:320.25px">LiarOnce.DESKTOP-NRV42PI</div>
<svg class="ic" style="left:93px;top:344px" width="9" height="9"><use href="#plus"/></svg>
<div class="a" style="left:103px;top:348px;width:6px;height:1px;background:repeating-linear-gradient(90deg,#808080 0 1px,transparent 1px 2px)"></div>
<svg class="ic" style="left:108px;top:340px" width="16" height="16" viewBox="0 0 16 16"><path d="M8 0.5L15.5 3.5V12L8 15.5L0.5 12V3.5Z" fill="#37C2E8"/><path d="M8 0.5L15.5 3.5L8 6L0.5 3.5Z" fill="#4CCAE2"/><path d="M8 6V15.5L0.5 12V3.5Z" fill="#CDF2F8"/><path d="M8 11.5V15.5L0.5 12V10Z" fill="#38BFDA"/><path d="M8 6V15.5L15.5 12V3.5Z" fill="#0E9CD2"/><path d="M8 11.5V15.5L15.5 12V10Z" fill="#0A7FB4"/></svg>
<div class="t" style="letter-spacing:0.099px;left:129px;top:340.25px">3D Objects</div>
<svg class="ic" style="left:93px;top:364px" width="9" height="9"><use href="#plus"/></svg>
<div class="a" style="left:103px;top:368px;width:6px;height:1px;background:repeating-linear-gradient(90deg,#808080 0 1px,transparent 1px 2px)"></div>
<svg class="ic" style="left:110px;top:360px" width="13" height="16"><use href="#fold"/></svg>
<div class="t" style="letter-spacing:0.233px;left:129px;top:360.25px">AndroidStudioProjects</div>
<svg class="ic" style="left:93px;top:384px" width="9" height="9"><use href="#plus"/></svg>
<div class="a" style="left:103px;top:388px;width:6px;height:1px;background:repeating-linear-gradient(90deg,#808080 0 1px,transparent 1px 2px)"></div>
<svg class="ic" style="left:110px;top:380px" width="13" height="16"><use href="#fold"/></svg>
<div class="t" style="letter-spacing:0.554px;left:129px;top:380.25px">apktool</div>
<svg class="ic" style="left:93px;top:404px" width="9" height="9"><use href="#plus"/></svg>
<div class="a" style="left:103px;top:408px;width:6px;height:1px;background:repeating-linear-gradient(90deg,#808080 0 1px,transparent 1px 2px)"></div>
<svg class="ic" style="left:110px;top:400px" width="13" height="16"><use href="#fold"/></svg>
<div class="t" style="letter-spacing:0.198px;left:129px;top:400.25px">AppData</div>
<svg class="ic" style="left:93px;top:424px" width="9" height="9"><use href="#plus"/></svg>
<div class="a" style="left:103px;top:428px;width:6px;height:1px;background:repeating-linear-gradient(90deg,#808080 0 1px,transparent 1px 2px)"></div>
<svg class="ic" style="left:110px;top:420px" width="13" height="16"><use href="#fold"/></svg>
<div class="a" style="left:108px;top:428px;width:8px;height:8px;box-sizing:border-box;border:1px solid #b8b8b8;background:#fff"></div>
<svg class="ic" style="left:109.5px;top:429.5px" width="5" height="5" viewBox="0 0 5 5"><path d="M0.5 4.5L3.5 1.5M1.5 1H4V3.5" stroke="#1D4FA8" stroke-width="1.2" fill="none"/></svg>
<div class="t" style="letter-spacing:0.23px;left:129px;top:420.25px">Application Data</div>
<svg class="ic" style="left:93px;top:444px" width="9" height="9"><use href="#plus"/></svg>
<div class="a" style="left:103px;top:448px;width:6px;height:1px;background:repeating-linear-gradient(90deg,#808080 0 1px,transparent 1px 2px)"></div>
<svg class="ic" style="left:110px;top:440px" width="13" height="16"><use href="#fold"/></svg>
<div class="t" style="letter-spacing:0.067px;left:129px;top:440.25px">Aptana Rubles</div>
<svg class="ic" style="left:93px;top:464px" width="9" height="9"><use href="#plus"/></svg>
<div class="a" style="left:103px;top:468px;width:6px;height:1px;background:repeating-linear-gradient(90deg,#808080 0 1px,transparent 1px 2px)"></div>
<svg class="ic" style="left:108px;top:463px" width="16" height="11" viewBox="0 0 16 11"><rect x="0.5" y="0.5" width="15" height="10" fill="#E8F0FA" stroke="#5C7FB8"/><rect x="2" y="2" width="6" height="7" fill="#BFD3EC"/><circle cx="5" cy="4" r="1.5" fill="#5a4a3a"/><path d="M2.5 9C2.5 6 7.5 6 7.5 9Z" fill="#3C9A5A"/><path d="M9.5 4H13.5M9.5 7H13.5" stroke="#44608a" stroke-width="1.2"/></svg>
<div class="t" style="letter-spacing:-0.001px;left:129px;top:460.25px">Contacts</div>
<svg class="ic" style="left:93px;top:484px" width="9" height="9"><use href="#plus"/></svg>
<div class="a" style="left:103px;top:488px;width:6px;height:1px;background:repeating-linear-gradient(90deg,#808080 0 1px,transparent 1px 2px)"></div>
<svg class="ic" style="left:110px;top:480px" width="13" height="16"><use href="#fold"/></svg>
<div class="a" style="left:108px;top:488px;width:8px;height:8px;box-sizing:border-box;border:1px solid #b8b8b8;background:#fff"></div>
<svg class="ic" style="left:109.5px;top:489.5px" width="5" height="5" viewBox="0 0 5 5"><path d="M0.5 4.5L3.5 1.5M1.5 1H4V3.5" stroke="#1D4FA8" stroke-width="1.2" fill="none"/></svg>
<div class="t" style="letter-spacing:0.157px;left:129px;top:480.25px">Cookies</div>
<svg class="ic" style="left:93px;top:504px" width="9" height="9"><use href="#plus"/></svg>
<div class="a" style="left:103px;top:508px;width:6px;height:1px;background:repeating-linear-gradient(90deg,#808080 0 1px,transparent 1px 2px)"></div>
<div class="a" style="left:127px;top:498px;width:53px;height:20px;background:#EDEDED"></div>
<svg class="ic" style="left:108px;top:502px" width="16" height="11" viewBox="0 0 16 11"><rect width="16" height="11" fill="#1E90F0"/><path d="M0 11L16 0V11Z" fill="#2CA0F8" opacity=".5"/><rect x="0" y="9" width="16" height="2" fill="#1474D0"/><rect x="1" y="9.5" width="1" height="1" fill="#fff"/><rect x="12" y="9.5" width="3" height="1" fill="#fff"/></svg>
<div class="t" style="letter-spacing:0.298px;left:129px;top:500.25px">Desktop</div>
<svg class="ic" style="left:93px;top:524px" width="9" height="9"><use href="#plus"/></svg>
<div class="a" style="left:103px;top:528px;width:6px;height:1px;background:repeating-linear-gradient(90deg,#808080 0 1px,transparent 1px 2px)"></div>
<svg class="ic" style="left:110px;top:520px" width="12" height="16" viewBox="0 0 12 16"><path d="M0.5 0.5H8.5L11.5 3.5V15.5H0.5Z" fill="#fff" stroke="#8c8c8c"/><path d="M3 3.5H6M4 5.5H7M2.5 8.5H9.5M2.5 10.5H9.5M2.5 12.5H9.5" stroke="#3B8BDA" stroke-width="1"/></svg>
<div class="t" style="letter-spacing:0.11px;left:129px;top:520.25px">Documents</div>
<svg class="ic" style="left:93px;top:544px" width="9" height="9"><use href="#plus"/></svg>
<div class="a" style="left:103px;top:548px;width:6px;height:1px;background:repeating-linear-gradient(90deg,#808080 0 1px,transparent 1px 2px)"></div>
<svg class="ic" style="left:108px;top:540px" width="16" height="16" viewBox="0 0 16 16"><path d="M5 0H11V7H16L8 16L0 7H5Z" fill="#2F86DD"/></svg>
<div class="t" style="letter-spacing:0.265px;left:129px;top:540.25px">Downloads</div>
<svg class="ic" style="left:93px;top:564px" width="9" height="9"><use href="#plus"/></svg>
<div class="a" style="left:103px;top:568px;width:6px;height:1px;background:repeating-linear-gradient(90deg,#808080 0 1px,transparent 1px 2px)"></div>
<svg class="ic" style="left:108px;top:560.5px" width="16" height="15" viewBox="0 0 16 15"><path d="M8 0.8L10.2 5.6L15.4 6.1L11.5 9.6L12.7 14.6L8 11.9L3.3 14.6L4.5 9.6L0.6 6.1L5.8 5.6Z" fill="#FFD47E" stroke="#F0A03C" stroke-width="1.1"/></svg>
<div class="t" style="letter-spacing:-0.033px;left:129px;top:560.25px">Favorites</div>
<svg class="ic" style="left:93px;top:584px" width="9" height="9"><use href="#plus"/></svg>
<div class="a" style="left:103px;top:588px;width:6px;height:1px;background:repeating-linear-gradient(90deg,#808080 0 1px,transparent 1px 2px)"></div>
<svg class="ic" style="left:110px;top:580px" width="13" height="16"><use href="#fold"/></svg>
<div class="t" style="letter-spacing:0.002px;left:129px;top:580.25px">GameMaker-HTML5-Player</div>
<svg class="ic" style="left:93px;top:604px" width="9" height="9"><use href="#plus"/></svg>
<div class="a" style="left:103px;top:608px;width:6px;height:1px;background:repeating-linear-gradient(90deg,#808080 0 1px,transparent 1px 2px)"></div>
<svg class="ic" style="left:110px;top:600px" width="13" height="16"><use href="#fold"/></svg>
<div class="t" style="letter-spacing:0.378px;left:129px;top:600.25px">gm81decompiler</div>
<svg class="ic" style="left:93px;top:624px" width="9" height="9"><use href="#plus"/></svg>
<div class="a" style="left:103px;top:628px;width:6px;height:1px;background:repeating-linear-gradient(90deg,#808080 0 1px,transparent 1px 2px)"></div>
<svg class="ic" style="left:110px;top:620px" width="13" height="16"><use href="#fold"/></svg>
<div class="t" style="letter-spacing:0.518px;left:129px;top:620.25px">Godot</div>
<svg class="ic" style="left:93px;top:644px" width="9" height="9"><use href="#plus"/></svg>
<div class="a" style="left:103px;top:648px;width:6px;height:1px;background:repeating-linear-gradient(90deg,#808080 0 1px,transparent 1px 2px)"></div>
<svg class="ic" style="left:110px;top:640px" width="13" height="16"><use href="#fold"/></svg>
<div class="t" style="letter-spacing:0.188px;left:129px;top:640.25px">HBuilder settings</div>
<svg class="ic" style="left:93px;top:664px" width="9" height="9"><use href="#plus"/></svg>
<div class="a" style="left:103px;top:668px;width:6px;height:1px;background:repeating-linear-gradient(90deg,#808080 0 1px,transparent 1px 2px)"></div>
<svg class="ic" style="left:110px;top:660px" width="13" height="16"><use href="#fold"/></svg>
<div class="t" style="letter-spacing:0.124px;left:129px;top:660.25px">IdeaProjects</div>
<svg class="ic" style="left:93px;top:684px" width="9" height="9"><use href="#plus"/></svg>
<div class="a" style="left:103px;top:688px;width:6px;height:1px;background:repeating-linear-gradient(90deg,#808080 0 1px,transparent 1px 2px)"></div>
<svg class="ic" style="left:110px;top:680px" width="13" height="16"><use href="#fold"/></svg>
<div class="t" style="letter-spacing:0.499px;left:129px;top:680.25px">jobbifier</div>
<svg class="ic" style="left:93px;top:704px" width="9" height="9"><use href="#plus"/></svg>
<div class="a" style="left:103px;top:708px;width:6px;height:1px;background:repeating-linear-gradient(90deg,#808080 0 1px,transparent 1px 2px)"></div>
<svg class="ic" style="left:110px;top:701px" width="12" height="15" viewBox="0 0 12 15"><path d="M4 0H12V8L9.5 5.6C6 7 5.2 10.5 7 15C1.5 12.5 -0.5 6 6.6 2.6Z" fill="#2C7FD8"/></svg>
<div class="t" style="letter-spacing:-0.162px;left:129px;top:700.25px">Links</div>
<svg class="ic" style="left:93px;top:724px" width="9" height="9"><use href="#plus"/></svg>
<div class="a" style="left:103px;top:728px;width:6px;height:1px;background:repeating-linear-gradient(90deg,#808080 0 1px,transparent 1px 2px)"></div>
<svg class="ic" style="left:110px;top:720px" width="13" height="16"><use href="#fold"/></svg>
<div class="a" style="left:108px;top:728px;width:8px;height:8px;box-sizing:border-box;border:1px solid #b8b8b8;background:#fff"></div>
<svg class="ic" style="left:109.5px;top:729.5px" width="5" height="5" viewBox="0 0 5 5"><path d="M0.5 4.5L3.5 1.5M1.5 1H4V3.5" stroke="#1D4FA8" stroke-width="1.2" fill="none"/></svg>
<div class="t" style="letter-spacing:0.006px;left:129px;top:720.25px">Local Settings</div>
<div class="a" style="left:278px;top:317px;width:17px;height:424px;background:#F0F0F0"></div>
<div class="a" style="left:278px;top:458px;width:15px;height:106px;background:#CDCDCD"></div>
<svg class="ic" style="left:282px;top:324px" width="9" height="6" viewBox="0 0 9 6"><path d="M0.7 5.3L4.5 1.3L8.3 5.3" fill="none" stroke="#505050" stroke-width="1.6"/></svg>
<div class="a" style="left:295px;top:316px;width:1px;height:425px;background:#828790"></div>
<div class="a" style="left:296px;top:296px;width:656px;height:445px;background:#F0F0F0"></div>
<div class="a" style="left:300px;top:320px;width:2px;height:421px;background:#fff"></div>
<div class="a" style="left:300px;top:320px;width:650px;height:2px;background:#fff"></div>
<div class="a" style="left:303px;top:300px;width:68px;height:20px;background:#C2C2C2"></div>
<div class="a" style="left:371px;top:298px;width:180px;height:23px;background:#fff"></div>
<div class="a" style="left:371px;top:298px;width:180px;height:4px;background:#FAA032"></div>
<div class="a" style="left:550px;top:298px;width:1px;height:23px;background:#8a8a8a"></div>
<svg class="ic" style="left:306px;top:304px" width="13" height="13" viewBox="0 0 13 13"><rect width="13" height="13" fill="#3D8FE0"/><rect x="0.5" y="0.5" width="12" height="4.5" fill="#8CC2F0" opacity=".85"/><rect x="4" y="1" width="1.2" height="3" fill="#3D8FE0"/><rect x="2.5" y="8.5" width="8" height="3.5" fill="#2FA0A8"/></svg>
<svg class="ic" style="left:376px;top:304px" width="13" height="13" viewBox="0 0 13 13"><rect width="13" height="13" fill="#4A90D9"/><rect x="0.5" y="0.5" width="12" height="4.5" fill="#8CC2F0" opacity=".85"/><rect x="4" y="1" width="1.2" height="3" fill="#4A90D9"/><rect x="2.5" y="8.5" width="8" height="3.5" fill="#7DC242"/></svg>
<div class="t sim" style="left:324.5px;top:304px;color:#808080">hosts</div>
<div class="t sim" style="left:394.5px;top:304.5px;color:#000">ask-pass-trampoline.bat</div>
<div class="a" style="left:357px;top:306px;width:10px;height:10px;background:#d6d6d6"></div>
<svg class="ic" style="left:359px;top:308px" width="6" height="6" viewBox="0 0 6 6"><path d="M0.3 0.3L5.7 5.7M5.7 0.3L0.3 5.7" stroke="#fff" stroke-width="1.4"/></svg>
<div class="a" style="left:535px;top:306px;width:10px;height:10px;background:#B0304A"></div>
<svg class="ic" style="left:537px;top:308px" width="6" height="6" viewBox="0 0 6 6"><path d="M0.3 0.3L5.7 5.7M5.7 0.3L0.3 5.7" stroke="#fff" stroke-width="1.4"/></svg>
<div class="a" style="left:302px;top:322px;width:648px;height:419px;box-sizing:border-box;border:1px solid;border-color:#8a8a8a #fff #fff #8a8a8a;border-right-width:2px;background:#272822"></div>
<div class="a" style="left:951px;top:251px;width:1px;height:490px;background:#777"></div>
<div class="a" style="left:303px;top:322px;width:1px;height:419px;background:#1a1a1a"></div>
<div class="a" style="left:303px;top:323px;width:645px;height:1px;background:#1c1c1a"></div>
<div class="a" style="left:304px;top:324px;width:41px;height:417px;background:#2F3337"></div>
<div class="a" style="left:345px;top:324px;width:603px;height:15px;background:#3E3D32"></div>
<div class="a" style="left:345px;top:324px;width:1px;height:15px;background:#f8f8f0"></div>
<div class="ln" style="top:325px">1</div>
<div class="code" style="top:325px"><span style="color:#F92672">@echo</span> off</div>
<div class="ln" style="top:340px">2</div>
<div class="code" style="top:340px"><span style="color:#66D9EF">setlocal</span></div>
<div class="ln" style="top:355px">3</div>
<div class="ln" style="top:370px">4</div>
<div class="code" style="top:370px"><span style="color:#F92672">set</span> ELECTRON_RUN_AS_NODE<span style="color:#F92672">=</span>1</div>
<div class="ln" style="top:385px">5</div>
<div class="code" style="top:385px"><span style="color:#F92672">set</span> ELECTRON_NO_ATTACH_CONSOLE<span style="color:#F92672">=</span>1</div>
<div class="ln" style="top:400px">6</div>
<div class="ln" style="top:415px">7</div>
<div class="code" style="top:415px">"%DESKTOP_PATH%" "%DESKTOP_ASKPASS_SCRIPT%" %*</div>
<div class="ln" style="top:430px">8</div>
<div class="ln" style="top:445px">9</div>
<div class="code" style="top:445px"><span style="color:#66D9EF">endlocal</span></div>
<div class="ln" style="top:460px">10</div>
</body></html>
